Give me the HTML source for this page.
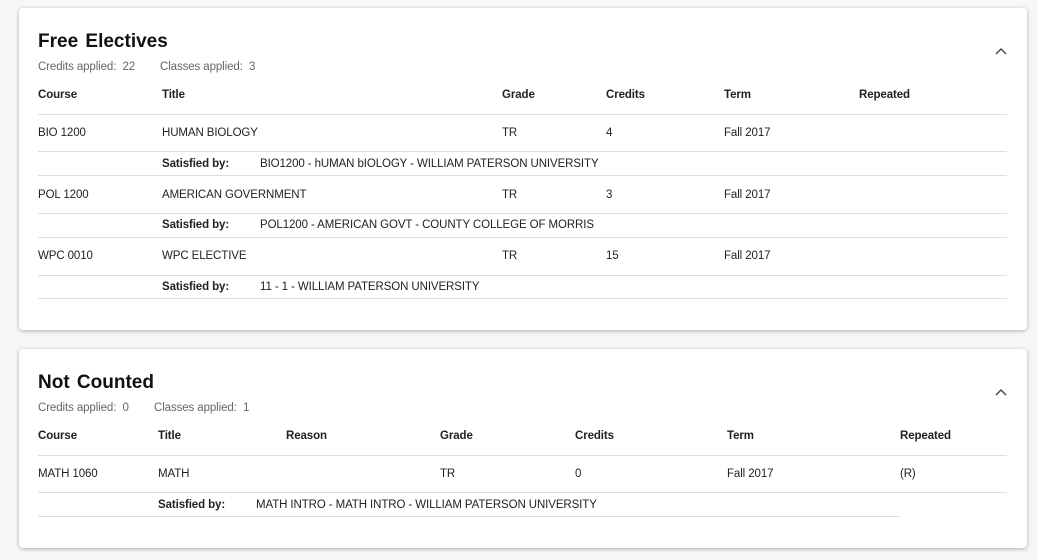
<!DOCTYPE html><html><head><style>
body{margin:0;width:1038px;height:560px;background:#f7f7f7;font-family:"Liberation Sans",sans-serif;position:relative;overflow:hidden;color:#222}
.card{position:absolute;left:19px;width:1008px;background:#fff;border-radius:4px;box-shadow:0 1px 4px rgba(0,0,0,.3)}
.t{position:absolute;font-size:11.5px;line-height:14px;white-space:nowrap;letter-spacing:-0.1px}
.b{font-weight:bold}
.h{position:absolute;font-size:19px;font-weight:bold;color:#111;word-spacing:2px}
.g{color:#666}
.l{position:absolute;height:1px;background:#ddd}
</style></head><body>
<div class="card" style="top:8px;height:322px"></div>
<div class="card" style="top:349px;height:199px"></div>
<div class="h" style="left:38px;top:31px">Free Electives</div>
<div class="t g" style="left:38px;top:60px">Credits applied:&nbsp; 22</div>
<div class="t g" style="left:160px;top:60px">Classes applied:&nbsp; 3</div>
<svg style="position:absolute;left:995px;top:47px" width="12" height="8"><path d="M1 7L6 2L11 7" stroke="#444" stroke-width="1.4" fill="none"/></svg>
<div class="t b" style="left:38px;top:88px">Course</div><div class="t b" style="left:162px;top:88px">Title</div><div class="t b" style="left:502px;top:88px">Grade</div><div class="t b" style="left:606px;top:88px">Credits</div><div class="t b" style="left:724px;top:88px">Term</div><div class="t b" style="left:859px;top:88px">Repeated</div>
<div class="l" style="left:38px;width:969px;top:114px"></div>
<div class="t" style="left:38px;top:126px">BIO 1200</div><div class="t" style="left:162px;top:126px">HUMAN BIOLOGY</div><div class="t" style="left:502px;top:126px">TR</div><div class="t" style="left:606px;top:126px">4</div><div class="t" style="left:724px;top:126px">Fall 2017</div>
<div class="l" style="left:38px;width:969px;top:151px"></div>
<div class="t b" style="left:162px;top:157px">Satisfied by:</div><div class="t" style="left:260px;top:157px">BIO1200 - hUMAN bIOLOGY - WILLIAM PATERSON UNIVERSITY</div>
<div class="l" style="left:38px;width:969px;top:175px"></div>
<div class="t" style="left:38px;top:188px">POL 1200</div><div class="t" style="left:162px;top:188px">AMERICAN GOVERNMENT</div><div class="t" style="left:502px;top:188px">TR</div><div class="t" style="left:606px;top:188px">3</div><div class="t" style="left:724px;top:188px">Fall 2017</div>
<div class="l" style="left:38px;width:969px;top:213px"></div>
<div class="t b" style="left:162px;top:218px">Satisfied by:</div><div class="t" style="left:260px;top:218px">POL1200 - AMERICAN GOVT - COUNTY COLLEGE OF MORRIS</div>
<div class="l" style="left:38px;width:969px;top:237px"></div>
<div class="t" style="left:38px;top:249px">WPC 0010</div><div class="t" style="left:162px;top:249px">WPC ELECTIVE</div><div class="t" style="left:502px;top:249px">TR</div><div class="t" style="left:606px;top:249px">15</div><div class="t" style="left:724px;top:249px">Fall 2017</div>
<div class="l" style="left:38px;width:969px;top:275px"></div>
<div class="t b" style="left:162px;top:280px">Satisfied by:</div><div class="t" style="left:260px;top:280px">11 - 1 - WILLIAM PATERSON UNIVERSITY</div>
<div class="l" style="left:38px;width:969px;top:298px"></div>

<div class="h" style="left:38px;top:372px">Not Counted</div>
<div class="t g" style="left:38px;top:401px">Credits applied:&nbsp; 0</div>
<div class="t g" style="left:154px;top:401px">Classes applied:&nbsp; 1</div>
<svg style="position:absolute;left:995px;top:388px" width="12" height="8"><path d="M1 7L6 2L11 7" stroke="#444" stroke-width="1.4" fill="none"/></svg>
<div class="t b" style="left:38px;top:429px">Course</div><div class="t b" style="left:158px;top:429px">Title</div><div class="t b" style="left:286px;top:429px">Reason</div><div class="t b" style="left:440px;top:429px">Grade</div><div class="t b" style="left:575px;top:429px">Credits</div><div class="t b" style="left:727px;top:429px">Term</div><div class="t b" style="left:900px;top:429px">Repeated</div>
<div class="l" style="left:38px;width:969px;top:455px"></div>
<div class="t" style="left:38px;top:467px">MATH 1060</div><div class="t" style="left:158px;top:467px">MATH</div><div class="t" style="left:440px;top:467px">TR</div><div class="t" style="left:575px;top:467px">0</div><div class="t" style="left:727px;top:467px">Fall 2017</div><div class="t" style="left:900px;top:467px">(R)</div>
<div class="l" style="left:38px;width:969px;top:492px"></div>
<div class="t b" style="left:158px;top:498px">Satisfied by:</div><div class="t" style="left:256px;top:498px">MATH INTRO - MATH INTRO - WILLIAM PATERSON UNIVERSITY</div>
<div class="l" style="left:38px;width:862px;top:516px"></div>
</body></html>
